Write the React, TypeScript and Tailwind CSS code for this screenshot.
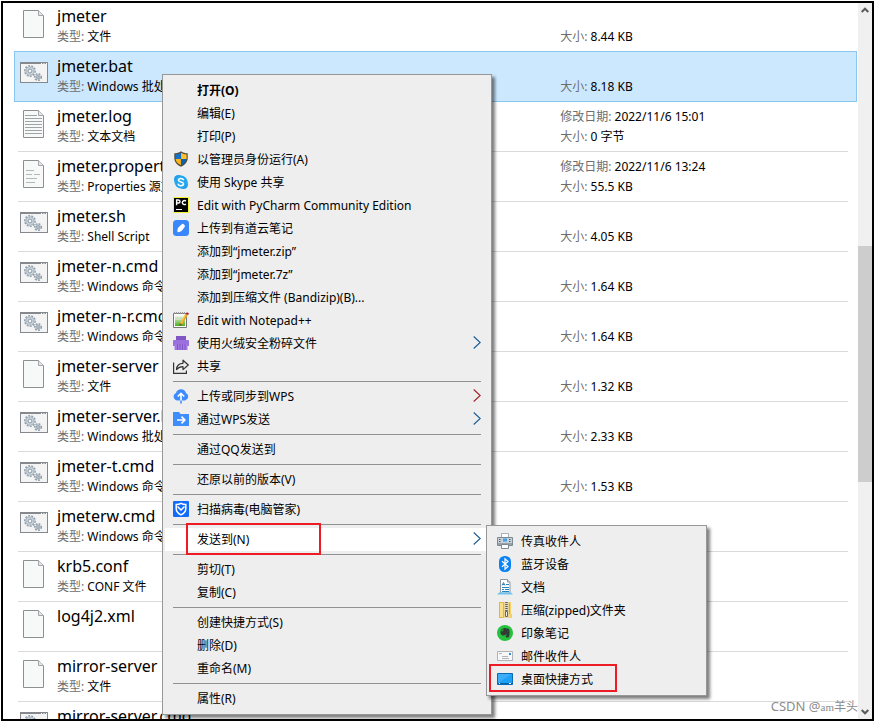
import { ReactNode } from 'react'

type FileKind = 'blank' | 'lines' | 'props' | 'script'

interface FileEntry {
   name: string
   kind: FileKind
   type?: string
   size?: string
   date?: string
   selected?: boolean
}

interface MenuEntry {
   label: string
   icon?: ReactNode
   bold?: boolean
   arrow?: string
}

const files: FileEntry[] = [
   { name: 'jmeter', kind: 'blank', type: '文件', size: '8.44 KB' },
   { name: 'jmeter.bat', kind: 'script', type: 'Windows 批处理文件', size: '8.18 KB', selected: true },
   { name: 'jmeter.log', kind: 'lines', type: '文本文档', size: '0 字节', date: '2022/11/6 15:01' },
   { name: 'jmeter.properties', kind: 'props', type: 'Properties 源文件', size: '55.5 KB', date: '2022/11/6 13:24' },
   { name: 'jmeter.sh', kind: 'script', type: 'Shell Script', size: '4.05 KB' },
   { name: 'jmeter-n.cmd', kind: 'script', type: 'Windows 命令脚本', size: '1.64 KB' },
   { name: 'jmeter-n-r.cmd', kind: 'script', type: 'Windows 命令脚本', size: '1.64 KB' },
   { name: 'jmeter-server', kind: 'blank', type: '文件', size: '1.32 KB' },
   { name: 'jmeter-server.bat', kind: 'script', type: 'Windows 批处理文件', size: '2.33 KB' },
   { name: 'jmeter-t.cmd', kind: 'script', type: 'Windows 命令脚本', size: '1.53 KB' },
   { name: 'jmeterw.cmd', kind: 'script', type: 'Windows 命令脚本' },
   { name: 'krb5.conf', kind: 'blank', type: 'CONF 文件' },
   { name: 'log4j2.xml', kind: 'blank' },
   { name: 'mirror-server', kind: 'blank', type: '文件' },
   { name: 'mirror-server.cmd', kind: 'script' },
]

/* File icons */

function Gear({ cx, cy, r }: { cx: number; cy: number; r: number }) {
   return (
      <g>
         <circle cx={cx} cy={cy} r={r} fill="none" stroke="#93a1ad" strokeWidth="1.6" strokeDasharray="1.9 1.25" />
         <circle cx={cx} cy={cy} r={r - 1.1} fill="#c9d5de" stroke="#9eacb8" strokeWidth="0.9" />
         <circle cx={cx} cy={cy} r={r / 2.7} fill="#f4f6f8" stroke="#84929e" strokeWidth="0.9" />
      </g>
   )
}

function FileIcon({ kind }: { kind: FileKind }) {
   if (kind === 'script') {
      return (
         <svg width="28" height="21" viewBox="0 0 28 21" className="mt-2.5">
            <rect x="0.5" y="0.5" width="27" height="20" fill="#f4f4f4" stroke="#85898d" />
            <path d="M0 1h28" stroke="#85898d" strokeWidth="2" />
            <path d="M21 1.5h1M23.500 1.500h1M26 1.500h1" stroke="#fff" />
            <Gear cx={10} cy={9} r={5.200} />
            <Gear cx={18} cy={15} r={3.300} />
         </svg>
      )
   }
   return (
      <svg width="21" height="28" viewBox="0 0 21 28" className="mt-2 ml-[3px]">
         <path d="M.5.5h15l5 5v22H.5z" fill="#f7f8f8" stroke="#8c9093" />
         <path d="M15.500.5v5h5" fill="#e4e7e9" stroke="#a2a6a9" />
         {kind === 'lines' && (
            <path d="M2 5.500h12M2 8.500h17M2 11.500h17M2 14.500h17M2 17.500h17M2 20.500h17M2 23.500h17" stroke="#a0a3a6" />
         )}
         {kind === 'props' && (
            <path d="M3 10.500h8M3 14.500h6M11 14.500h6M3 18.500h11M3 22.500h9" stroke="#b5b8ba" strokeWidth="1.200" />
         )}
      </svg>
   )
}

/* Menu icons, all on a 16px grid */

function Icon({ children }: { children: ReactNode }) {
   return (
      <svg width="16" height="16" viewBox="0 0 16 16" fill="none">
         {children}
      </svg>
   )
}

const shieldIcon = (
   <Icon>
      <path d="M8 .3C6 1.800 3.800 2.300 1.300 2.300V7c0 4 2.700 6.900 6.700 8.700C12 13.900 14.700 11 14.700 7V2.300C12.200 2.300 10 1.800 8 .3z" fill="#4f4a3c" />
      <path d="M7.900 1.700C6 2.900 4.400 3.300 2.400 3.400V8h5.500z" fill="#1470c8" />
      <path d="M8.100 1.700c1.900 1.200 3.500 1.600 5.500 1.700V8H8.100z" fill="#fdc12d" />
      <path d="M2.500 8h5.400v6.300C5 12.800 2.900 10.800 2.500 8z" fill="#fdb813" />
      <path d="M13.500 8H8.100v6.300c2.900-1.500 5-3.500 5.400-6.300z" fill="#0b62b4" />
   </Icon>
)

const skypeIcon = (
   <Icon>
      <circle cx="5.500" cy="5.500" r="4.500" fill="#1c9ce8" />
      <circle cx="10.500" cy="10.500" r="4.500" fill="#1c9ce8" />
      <circle cx="8" cy="8" r="6.500" fill="#25a7ee" />
      <path d="M10.500 5.700C10 4.800 9 4.400 7.900 4.400c-1.400 0-2.400.7-2.400 1.800 0 2.500 5 1.200 5 3.600 0 1.200-1.100 1.900-2.600 1.900-1.300 0-2.300-.5-2.700-1.500" stroke="#fff" strokeWidth="1.500" strokeLinecap="round" />
   </Icon>
)

const pycharmIcon = (
   <Icon>
      <path d="M0 0h16v16H0z" fill="#f6f23c" />
      <path d="M1 1h14v14H1z" fill="#000" />
      <path d="M3.600 8.200V3H5.500a1.500 1.500 0 010 3H3.600M12.900 4.100a2.200 2.200 0 00-3.600 1.500 2.200 2.200 0 003.600 1.500" stroke="#fff" strokeWidth="1.400" />
      <path d="M3 12.500h6" stroke="#fff" />
   </Icon>
)

const noteIcon = (
   <Icon>
      <rect width="16" height="16" rx="3.500" fill="#3987fb" />
      <path d="M4.600 12.200c-.6-2.700 0-4.300 2-6l2.200-2c.8-.6 1.400-.4 2.200.4.9.9 1.300 1.700.6 2.500l-1.800 2.300c-1.400 1.800-2.900 2.800-5.200 2.800z" fill="#fff" />
   </Icon>
)

const notepadIcon = (
   <Icon>
      <path d="M.5 1.500h13v14H.5z" fill="#fafafa" stroke="#777" />
      <path d="M2 4h10v10H2z" fill="url(#pad)" />
      <path d="M2 5.500h7M2 7.500h6" stroke="#d2ddcb" />
      <path d="M1 1h12" stroke="#999" strokeDasharray="1 1" strokeWidth="2" />
      <path d="M13.500 2.500L8 12" stroke="#e8a520" strokeWidth="2.600" />
      <path d="M12.600 2.500L7.600 11.500" stroke="#ffe06a" strokeWidth="0.8" />
      <path d="M12.800 1.800L14 .3l2 1.200-1 1.600z" fill="#b3182a" />
      <path d="M6.900 11.300L6.500 14l2.500-1.600z" fill="#6b5525" />
      <defs>
         <linearGradient id="pad" x1="0" y1="0" x2="0" y2="1">
            <stop stopColor="#f2f9e6" />
            <stop offset="1" stopColor="#46ad1a" />
         </linearGradient>
      </defs>
   </Icon>
)

const shredderIcon = (
   <Icon>
      <path d="M3 1h10v5H3z" fill="#8055c4" />
      <path d="M1 5h14a1 1 0 011 1v5H0V6a1 1 0 011-1z" fill="#9b6fdd" />
      <path d="M1.500 9h13v6h-13z" fill="#a47ae2" />
      <path d="M4.500 9v6M7 9v6M9.500 9v6M12 9v6" stroke="#7c50bf" strokeWidth="0.900" />
   </Icon>
)

const shareIcon = (
   <Icon>
      <path d="M.6 4.500v10.900h12.800v-3" stroke="#333" strokeWidth="1.200" />
      <path d="M3.500 11.500c.3-4 2.800-6.200 6.500-6.200V2.200L15.300 7 10 11.600V8.700c-2.700 0-4.700.8-6.500 2.800z" stroke="#333" strokeWidth="1.200" strokeLinejoin="round" />
   </Icon>
)

const cloudIcon = (
   <Icon>
      <path d="M4 12.500A4 4 0 013 4.900 5.200 5.200 0 0113 5a4 4 0 01-1 7.500z" fill="#3d8bff" />
      <path d="M8 13V5.500M4.800 8.500L8 5.300l3.200 3.200" stroke="#fff" strokeWidth="1.600" />
      <path d="M8 12.500v3" stroke="#3d8bff" strokeWidth="1.600" />
   </Icon>
)

const folderIcon = (
   <Icon>
      <path d="M0 1h6l1.500 2H16v12H0z" fill="#3f8dfb" />
      <path d="M4 9h7.500M8.500 5.700L11.800 9l-3.300 3.300" stroke="#fff" strokeWidth="1.700" />
   </Icon>
)

const guardIcon = (
   <Icon>
      <rect width="16" height="16" rx="1" fill="#126cf9" />
      <path d="M8 2.400c-1.600.9-3 1.100-4.800 1.100v4c0 3 1.900 5 4.800 6.400 2.900-1.400 4.800-3.400 4.800-6.400v-4C11 3.500 9.600 3.300 8 2.400z" stroke="#fff" strokeWidth="1.500" />
      <path d="M4.500 5.500L8 9l3.500-3.500" stroke="#fff" strokeWidth="1.500" />
   </Icon>
)

const faxIcon = (
   <Icon>
      <path d="M4.500 5V.5h7V5" fill="#fff" stroke="#a8afb5" />
      <path d="M.5 4.500h15v8H.5z" fill="#c7d0d6" stroke="#7e8a93" />
      <path d="M6 5.500h4v3H6z" fill="#3fa3ec" />
      <path d="M2 6.500h2M2 8.500h2M12 6.500h2M12 8.500h2" stroke="#4e5d68" strokeDasharray="1 .500" />
      <path d="M1 11h14" stroke="#68757f" />
      <path d="M4.500 11.500h7v4h-7z" fill="#fff" stroke="#7e8a93" />
   </Icon>
)

const bluetoothIcon = (
   <Icon>
      <rect x="2" width="12" height="16" rx="5.500" fill="#0a84f5" />
      <path d="M5 5.300l6 5.200-3 2.600V2.900l3 2.600-6 5.200" stroke="#fff" strokeWidth="1.200" />
   </Icon>
)

const documentIcon = (
   <Icon>
      <path d="M3.500.5h7l2.500 2.500v11h-9.500z" fill="#fff" stroke="#8b98a1" />
      <path d="M10.500.5v2.500h2.500" fill="#d9e2e8" stroke="#8b98a1" />
      <path d="M5 6.500l1.500-3 1.500 3M5.500 5.500h2M9 5.500h3M5 8.500h7M5 10.500h2M8 10.500h4M5 12.500h7" stroke="#2a83bd" />
      <path d="M2 13.500h12l2 2H0z" fill="#6fc3ee" />
   </Icon>
)

const zipIcon = (
   <Icon>
      <path d="M2 0h9l3 0v12h1v4H2z" fill="#f5d267" />
      <path d="M2.500.5h4v15h-4z" fill="#fadf8a" stroke="#e0b743" />
      <path d="M7.500 0h4v16h-4z" fill="#ded8c8" />
      <path d="M9.500 0v9" stroke="#5c5c5c" strokeWidth="2.500" strokeDasharray="1 1" />
      <path d="M8.500 9.500h2v5h-2z" fill="#eee" stroke="#666" />
      <path d="M12.500 1v11" stroke="#dfae2e" />
   </Icon>
)

const evernoteIcon = (
   <Icon>
      <circle cx="8" cy="8" r="8" fill="#25c23e" />
      <path d="M6.300 3.300c1.500-.6 2.800-.4 3.300.3 1.500.1 2.600.4 2.800 1.300.4 2 .3 4.500-.3 6.500-.3 1-1.200 1.300-2.200 1.200-1.200-.1-1.700-1.200-1.200-2 .3-.5.9-.5 1.400-.4-.2-.7-.9-.8-1.500-.4-.7.7-2.400.8-3.600.4C3.700 9.700 3.300 7.600 3.300 6.300h2.400c.5 0 .6-.3.6-.7z" fill="#333b35" />
      <path d="M3.500 5.600L5.600 3.400v2.200z" fill="#333b35" />
      <path d="M10.200 7c.2-.5 1-.5 1.200.1z" fill="#25c23e" />
   </Icon>
)

const mailIcon = (
   <Icon>
      <path d="M.5 3.500h15v9H.5z" fill="#f7f7f7" stroke="#aeb3b7" />
      <path d="M12 5h2v2h-2z" fill="#2f8ddd" />
      <path d="M2 5.500h3M5 8.500h6M5 10.500h7" stroke="#b1b5b8" />
   </Icon>
)

const desktopIcon = (
   <Icon>
      <path d="M.5 2.500h15v11H.5z" fill="#1ea0f5" stroke="#0a69b5" />
      <path d="M1 12L14.500 3H1z" fill="#3badfa" />
      <path d="M1 12.500h14" stroke="#0b62a8" />
      <path d="M2 12.500h1M12 12.500h2" stroke="#fff" />
   </Icon>
)

// one inner array per block between separators
const menuGroups: MenuEntry[][] = [
   [
      { label: '打开(O)', bold: true },
      { label: '编辑(E)' },
      { label: '打印(P)' },
      { label: '以管理员身份运行(A)', icon: shieldIcon },
      { label: '使用 Skype 共享', icon: skypeIcon },
      { label: 'Edit with PyCharm Community Edition', icon: pycharmIcon },
      { label: '上传到有道云笔记', icon: noteIcon },
      { label: '添加到“jmeter.zip”' },
      { label: '添加到“jmeter.7z”' },
      { label: '添加到压缩文件 (Bandizip)(B)...' },
      { label: 'Edit with Notepad++', icon: notepadIcon },
      { label: '使用火绒安全粉碎文件', icon: shredderIcon, arrow: '#1c5f96' },
      { label: '共享', icon: shareIcon },
   ],
   [
      { label: '上传或同步到WPS', icon: cloudIcon, arrow: '#a3262f' },
      { label: '通过WPS发送', icon: folderIcon, arrow: '#1c5f96' },
   ],
   [{ label: '通过QQ发送到' }],
   [{ label: '还原以前的版本(V)' }],
   [{ label: '扫描病毒(电脑管家)', icon: guardIcon }],
   [{ label: '发送到(N)', arrow: '#1c5f96' }],
   [{ label: '剪切(T)' }, { label: '复制(C)' }],
   [{ label: '创建快捷方式(S)' }, { label: '删除(D)' }, { label: '重命名(M)' }],
   [{ label: '属性(R)' }],
]

const sendToItems: MenuEntry[] = [
   { label: '传真收件人', icon: faxIcon },
   { label: '蓝牙设备', icon: bluetoothIcon },
   { label: '文档', icon: documentIcon },
   { label: '压缩(zipped)文件夹', icon: zipIcon },
   { label: '印象笔记', icon: evernoteIcon },
   { label: '邮件收件人', icon: mailIcon },
   { label: '桌面快捷方式', icon: desktopIcon },
]

function FileRow({ file }: { file: FileEntry }) {
   const frame = file.selected
      ? '-mt-px -ml-1 -mr-[9px] h-[51px] border border-[#8ac6f2] bg-[#cce8ff] pl-[5px] pr-2'
      : 'h-[50px] border-b border-[#dadada] pl-0.5'
   return (
      <li className={`grid shrink-0 grid-cols-[65%_1fr] whitespace-nowrap ${frame}`}>
         <div className="flex gap-[9px]">
            <div className="w-7 shrink-0">
               <FileIcon kind={file.kind} />
            </div>
            <div className="pt-1">
               <div className="text-base leading-5">{file.name}</div>
               {file.type && (
                  <div className="pt-px text-xs leading-5">
                     <span className="text-[#6d6d6d]">类型: </span>
                     {file.type}
                  </div>
               )}
            </div>
         </div>
         <div className="flex flex-col justify-end pb-1 pl-0.5 text-xs leading-5">
            {file.date && (
               <div>
                  <span className="text-[#6d6d6d]">修改日期: </span>
                  {file.date}
               </div>
            )}
            {file.size && (
               <div>
                  <span className="text-[#6d6d6d]">大小: </span>
                  {file.size}
               </div>
            )}
         </div>
      </li>
   )
}

function MenuItem({ item, active, children }: { item: MenuEntry; active?: boolean; children?: ReactNode }) {
   return (
      <button
         type="button"
         role="menuitem"
         className={`relative flex h-[23px] w-full items-center gap-2 px-2 text-left text-xs hover:bg-white ${
            active ? 'bg-white' : ''
         } ${item.bold ? 'font-bold' : ''}`}
      >
         <span className="mb-px h-4 w-4 shrink-0">{item.icon}</span>
         <span className="flex-1 whitespace-nowrap">{item.label}</span>
         {item.arrow && (
            <svg width="8" height="14" viewBox="0 0 8 14" fill="none" stroke={item.arrow} strokeWidth="1.200" className="mb-px">
               <path d="M.7.5L7.200 6.500 .7 12.500" />
            </svg>
         )}
         {children}
      </button>
   )
}

const panel = 'absolute border border-[#979797] bg-[#eeeeee] px-0.5 py-1 shadow-[3px_3px_3px_rgba(0,0,0,0.5)]'

function ContextMenu() {
   return (
      <div role="menu" className={`${panel} left-[159px] top-[71px] w-[330px]`}>
         {menuGroups.map((group, i) => (
            <div key={i}>
               {i > 0 && <hr className="mx-2 my-[3px] border-[#919191]" />}
               {group.map((item) => {
                  const isSendTo = item.label === '发送到(N)'
                  return (
                     <MenuItem key={item.label} item={item} active={isSendTo}>
                        {isSendTo && (
                           <span className="absolute -bottom-1 -top-[5px] left-[21px] w-[135px] border-2 border-[#ed1c24]" />
                        )}
                     </MenuItem>
                  )
               })}
            </div>
         ))}
      </div>
   )
}

function SendToMenu() {
   return (
      <div role="menu" className={`${panel} left-[483px] top-[522px] w-[221px]`}>
         {sendToItems.map((item, i) => (
            <MenuItem key={item.label} item={item}>
               {i === sendToItems.length - 1 && (
                  <span className="absolute -bottom-px -top-1 left-0 w-32 border-2 border-[#ed1c24]" />
               )}
            </MenuItem>
         ))}
      </div>
   )
}

function ScrollBar() {
   return (
      <div className="flex w-3.5 shrink-0 flex-col items-center bg-[#f0f0f0]">
         <button type="button" aria-label="向上滚动" className="flex h-3.5 w-full items-center justify-center">
            <svg width="8" height="6" viewBox="0 0 8 6" fill="none" stroke="#5a5a5a" strokeWidth="2">
               <path d="M.7 5L4 1.700 7.300 5" />
            </svg>
         </button>
         <div className="relative w-full flex-1">
            <div className="absolute top-1/3 h-[236px] w-full bg-[#cdcdcd]" />
         </div>
         <button type="button" aria-label="向下滚动" className="flex h-3.5 w-full items-center justify-center">
            <svg width="8" height="6" viewBox="0 0 8 6" fill="none" stroke="#5a5a5a" strokeWidth="2">
               <path d="M.7 1L4 4.300 7.300 1" />
            </svg>
         </button>
      </div>
   )
}

function App() {
   return (
      <main className="h-screen bg-white py-px pl-px font-['Noto_Sans','Noto_Sans_CJK_SC',sans-serif] text-black">
         <div className="relative flex h-full overflow-hidden border-2 border-black">
            <ul className="-mt-px flex min-w-0 flex-1 flex-col pl-[15px] pr-2.5">
               {files.map((file) => (
                  <FileRow key={file.name} file={file} />
               ))}
            </ul>
            <ScrollBar />
            <ContextMenu />
            <SendToMenu />
            <div className="absolute bottom-0.5 right-3.5 whitespace-nowrap text-[13px] leading-5 text-[#8c8c8c]">
               CSDN @<span className="font-['Liberation_Serif',serif] text-[11px]">am</span>
               <span className="text-xs">羊头</span>
            </div>
         </div>
      </main>
   )
}

export default App
